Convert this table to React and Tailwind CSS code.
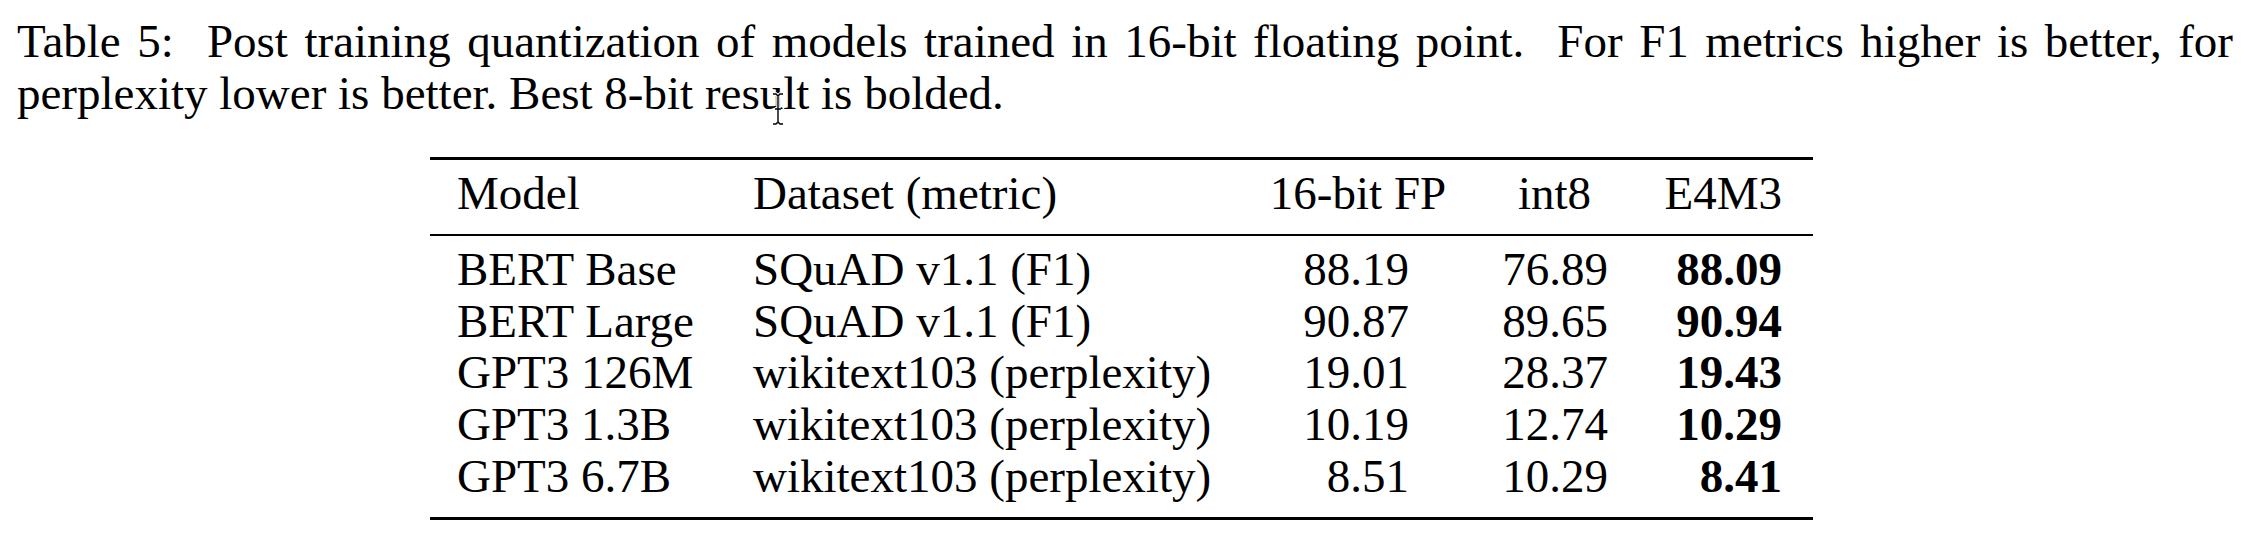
import React from "react";

const rows = [
  { model: "BERT Base", data: "SQuAD v1.1 (F1)", fp: "88.19", i8: "76.89", e4: "88.09" },
  { model: "BERT Large", data: "SQuAD v1.1 (F1)", fp: "90.87", i8: "89.65", e4: "90.94" },
  { model: "GPT3 126M", data: "wikitext103 (perplexity)", fp: "19.01", i8: "28.37", e4: "19.43" },
  { model: "GPT3 1.3B", data: "wikitext103 (perplexity)", fp: "10.19", i8: "12.74", e4: "10.29" },
  { model: "GPT3 6.7B", data: "wikitext103 (perplexity)", fp: "8.51", i8: "10.29", e4: "8.41" },
];

// text cursor that sits over the caption in the screenshot
const IBeam = () => (
  <svg
    className="absolute left-[771px] top-[92px]"
    width="14"
    height="34"
    viewBox="0 0 14 34"
  >
    <path
      d="M2 2h3l2 2 2-2h3M7 4v26M2 32h3l2-2 2 2h3M4 17h6"
      fill="none"
      stroke="#fff"
      strokeWidth="3.5"
    />
    <path
      d="M2 2h3l2 2 2-2h3M7 4v26M2 32h3l2-2 2 2h3M4 17h6"
      fill="none"
      stroke="#000"
      strokeWidth="1.4"
    />
  </svg>
);

const App = () => {
  return (
    <div className="relative w-[2254px] h-[548px] bg-white text-black font-['Liberation_Serif','Times_New_Roman',serif] text-[47px] leading-[1.1]">
      {/* Caption */}
      <p className="pt-[16px] pl-[17px] pr-[21px] text-justify">
        Table 5:&nbsp; Post training quantization of models trained in 16-bit floating point.&nbsp; For F1 metrics higher is better, for perplexity lower is better. Best 8-bit result is bolded.
      </p>

      {/* Table */}
      <div className="ml-[430px] mt-[38px] w-[1383px] flex flex-col whitespace-nowrap">
        <div className="h-[3px] bg-black" />
        <div className="mt-[8px] pl-[27px] grid grid-cols-[296px_517px_176px_162px_174px]">
          <div>Model</div>
          <div>Dataset (metric)</div>
          <div className="flex justify-center">16-bit FP</div>
          <div className="text-right pr-[17px]">int8</div>
          <div className="text-right">E4M3</div>
        </div>
        <div className="mt-[14px] h-[2px] bg-black" />
        <div className="mt-[8px] pl-[27px] flex flex-col">
          {rows.map((r) => (
            <div key={r.model} className="grid grid-cols-[296px_517px_176px_162px_174px]">
              <div>{r.model}</div>
              <div>{r.data}</div>
              <div className="text-right pr-[37px]">{r.fp}</div>
              <div className="text-right">{r.i8}</div>
              <div className="text-right font-bold">{r.e4}</div>
            </div>
          ))}
        </div>
        <div className="mt-[14px] h-[3px] bg-black" />
      </div>

      <IBeam />
    </div>
  );
};

export default App;
